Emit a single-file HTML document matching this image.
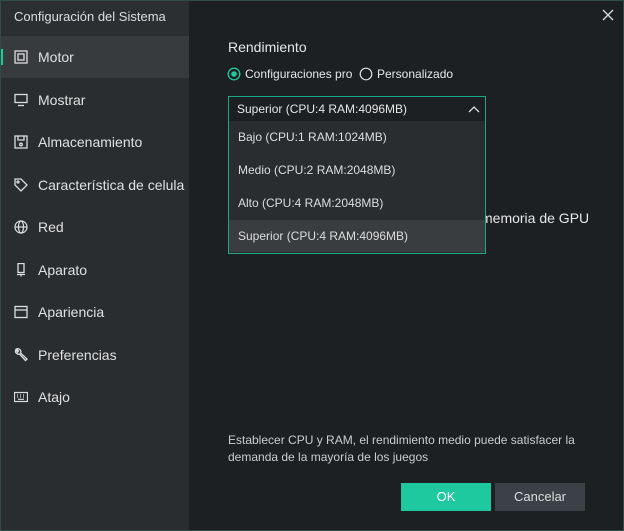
<!DOCTYPE html><html><head><style>
body{margin:0;width:624px;height:531px;background:#1d2023;font-family:"Liberation Sans",sans-serif;color:#e6e6e6;position:relative;overflow:hidden}
.win{position:absolute;left:0;top:0;width:622px;height:529px;border:1px solid #2f4d47;}
.side{position:absolute;left:0;top:0;width:189px;height:531px;background:#2a2d30}
.tb{position:absolute;left:0;top:0;width:189px;height:34px;background:#2c2f32;font-size:13px;line-height:34px;padding-left:14px;box-sizing:border-box;color:#ddd}
.it{position:absolute;left:0;width:189px;height:42px;font-size:14px;line-height:42px;padding-left:38px;box-sizing:border-box;color:#e0e0e0}
.it svg{position:absolute;left:14px;top:14px}
.act{background:#383b3e}
.act:before{content:"";position:absolute;left:0;top:13px;width:3px;height:16px;background:#1ec9a0}
.abs{position:absolute}
.dd{position:absolute;left:228px;top:96px;width:258px;height:158px;border:1px solid #1aa887;box-sizing:border-box;background:#2a2d30}
.opt{height:33px;line-height:33px;font-size:12px;padding-left:9px;color:#ddd}
</style></head><body>
<div class="side">
<div class="tb">Configuración del Sistema</div>
<div class="it act" style="top:36px"><svg width="14" height="14" viewBox="0 0 14 14" fill="none" stroke="#ddd" stroke-width="1.3"><rect x="1" y="1" width="12" height="12"/><rect x="4" y="4" width="6" height="6"/></svg>Motor</div>
<div class="it" style="top:79px"><svg width="14" height="14" viewBox="0 0 14 14" fill="none" stroke="#ddd" stroke-width="1.3"><rect x="1" y="1.5" width="12" height="8"/><path d="M4 12.5h6"/></svg>Mostrar</div>
<div class="it" style="top:121px"><svg width="14" height="14" viewBox="0 0 14 14" fill="none" stroke="#ddd" stroke-width="1.3"><rect x="1" y="1" width="12" height="12"/><path d="M4 1v4h6V1"/><circle cx="7" cy="9.5" r="1.3"/></svg>Almacenamiento</div>
<div class="it" style="top:164px"><svg width="14" height="14" viewBox="0 0 14 14" fill="none" stroke="#ddd" stroke-width="1.3"><path d="M1 1h6l6 6-6 6-6-6z"/><circle cx="4" cy="4" r="1"/></svg>Característica de celula</div>
<div class="it" style="top:206px"><svg width="14" height="14" viewBox="0 0 14 14" fill="none" stroke="#ddd" stroke-width="1.2"><circle cx="7" cy="7" r="6"/><ellipse cx="7" cy="7" rx="2.5" ry="6"/><path d="M1 7h12"/></svg>Red</div>
<div class="it" style="top:249px"><svg width="14" height="14" viewBox="0 0 14 14" fill="none" stroke="#ddd" stroke-width="1.3"><rect x="4" y="0.5" width="6" height="9"/><path d="M3 11.5h8M7 11.5v2"/></svg>Aparato</div>
<div class="it" style="top:291px"><svg width="14" height="14" viewBox="0 0 14 14" fill="none" stroke="#ddd" stroke-width="1.3"><rect x="1" y="1.5" width="12" height="11"/><path d="M1 5h12"/></svg>Apariencia</div>
<div class="it" style="top:334px"><svg width="14" height="14" viewBox="0 0 14 14" fill="none" stroke="#ddd" stroke-width="1.3"><path d="M2 1.5a3 3 0 0 0 3.5 4.5l6 6.5 1.5-1.5-6.5-6A3 3 0 0 0 2.5 1l2 2-1 1.3z"/></svg>Preferencias</div>
<div class="it" style="top:376px"><svg width="14" height="14" viewBox="0 0 14 14" fill="none" stroke="#ddd" stroke-width="1.2"><rect x="0.5" y="2.5" width="13" height="9"/><path d="M3 5h1M6 5h1M9 5h1M3 7h1M6 7h1M9 7h1M4 9.3h6"/></svg>Atajo</div>
</div>
<svg class="abs" style="left:602px;top:9px" width="12" height="12" viewBox="0 0 12 12" stroke="#ddd" stroke-width="1.3"><path d="M1 1l10 10M11 1L1 11"/></svg>
<div class="abs" style="left:228px;top:39px;font-size:14px">Rendimiento</div>
<svg class="abs" style="left:227px;top:67px" width="14" height="14"><circle cx="7" cy="7" r="5.8" fill="none" stroke="#1ec9a0" stroke-width="1.3"/><circle cx="7" cy="7" r="2.8" fill="#1ec9a0"/></svg>
<div class="abs" style="left:245px;top:67px;font-size:12px">Configuraciones pro</div>
<svg class="abs" style="left:359px;top:67px" width="14" height="14"><circle cx="7" cy="7" r="5.8" fill="none" stroke="#ddd" stroke-width="1.2"/></svg>
<div class="abs" style="left:377px;top:67px;font-size:12px">Personalizado</div>
<div class="abs" style="left:481px;top:210px;font-size:14px">memoria de GPU</div>
<div class="abs" style="left:228px;top:96px;width:258px;height:26px;border:1px solid #1aa887;box-sizing:border-box;background:#1d2023;font-size:12px;line-height:24px;padding-left:8px">Superior (CPU:4 RAM:4096MB)<svg class="abs" style="left:239px;top:8px" width="12" height="8"><path d="M1 7l5-5 5 5" fill="none" stroke="#ddd" stroke-width="1.3"/></svg></div>
<div class="abs" style="left:228px;top:121px;width:258px;height:133px;border:1px solid #1aa887;border-top:none;box-sizing:border-box;background:#2a2d30">
<div class="opt">Bajo (CPU:1 RAM:1024MB)</div>
<div class="opt">Medio (CPU:2 RAM:2048MB)</div>
<div class="opt">Alto (CPU:4 RAM:2048MB)</div>
<div class="opt" style="background:#3a3d40;height:32px">Superior (CPU:4 RAM:4096MB)</div>
</div>
<div class="abs" style="left:228px;top:432px;font-size:12px;line-height:17px;color:#ccc;width:370px">Establecer CPU y RAM, el rendimiento medio puede satisfacer la demanda de la mayoría de los juegos</div>
<div class="abs" style="left:401px;top:483px;width:90px;height:28px;background:#1ec9a0;color:#fff;font-size:13px;line-height:28px;text-align:center">OK</div>
<div class="abs" style="left:495px;top:483px;width:90px;height:28px;background:#3b4146;color:#ddd;font-size:13px;line-height:28px;text-align:center">Cancelar</div>
<div class="win"></div>
</body></html>
